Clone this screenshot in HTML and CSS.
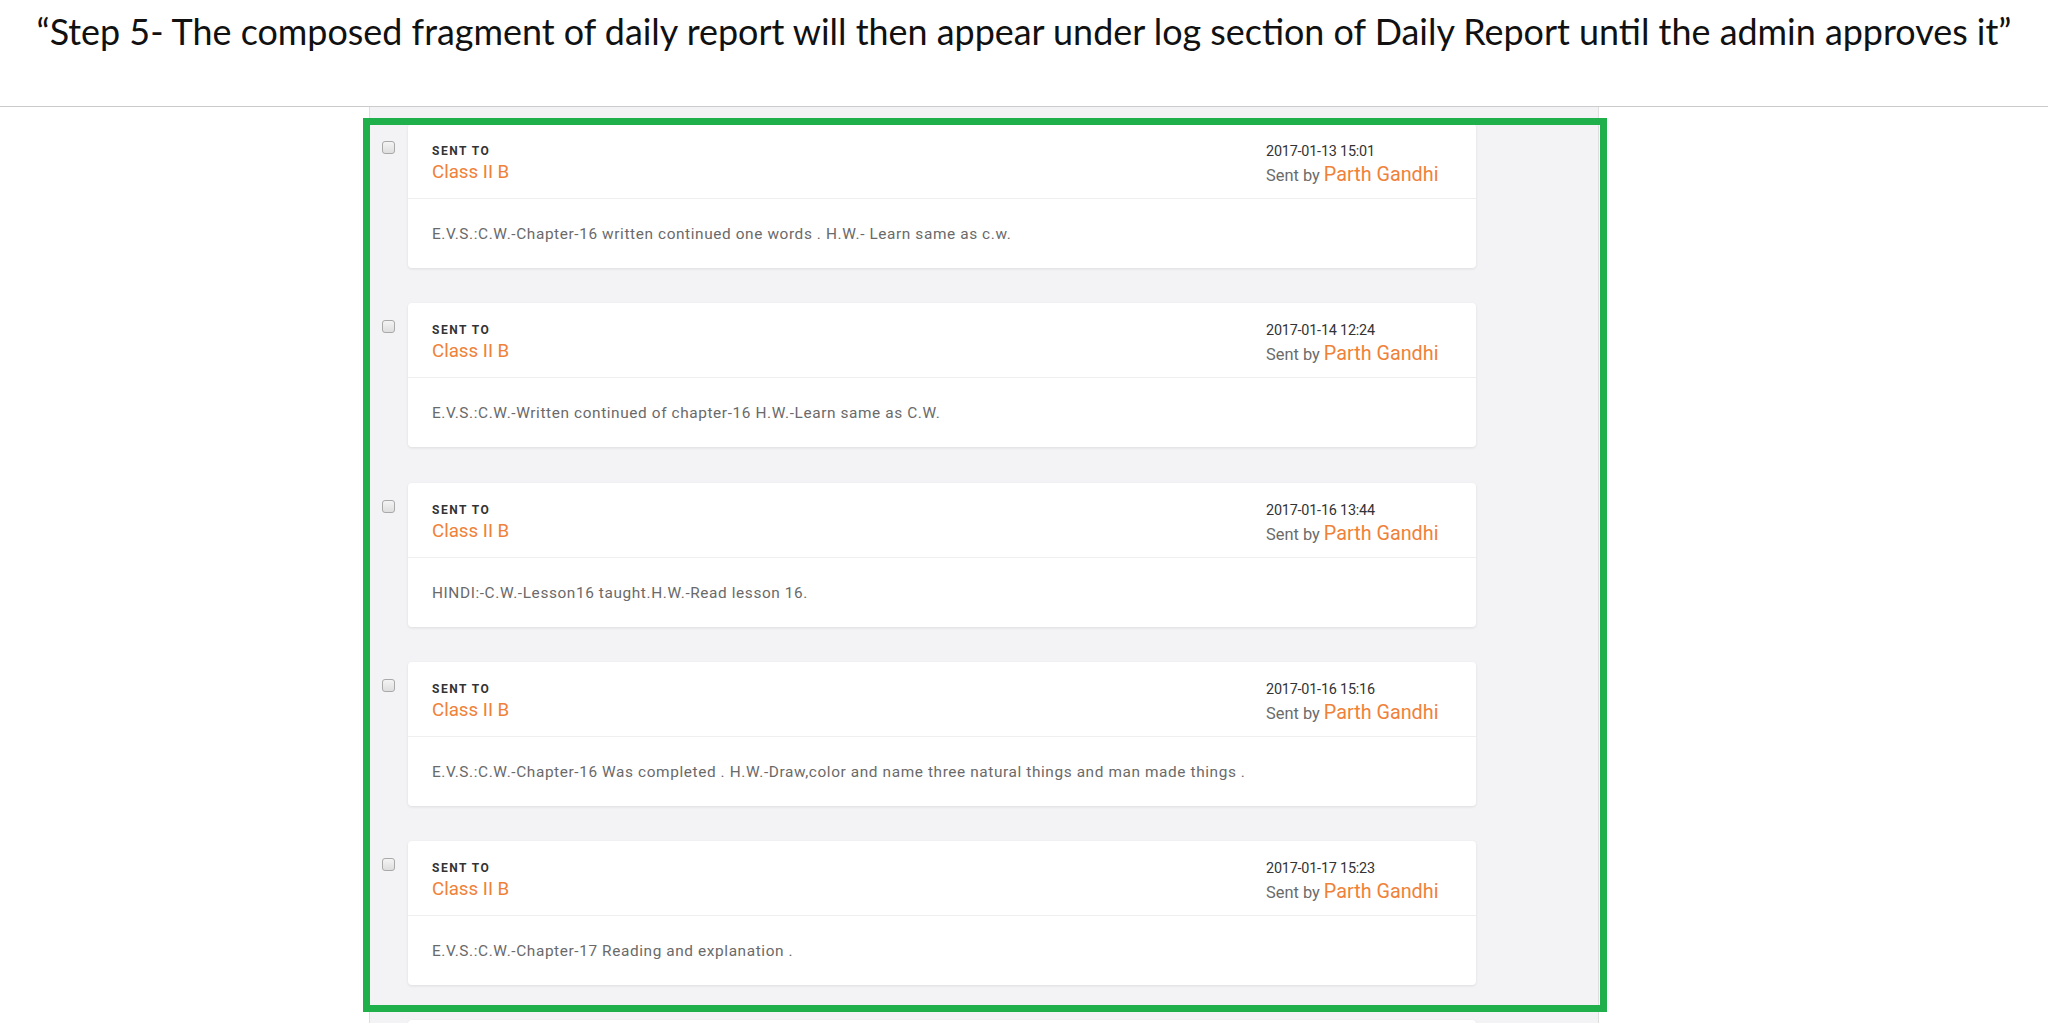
FILE: index.html
```html
<!DOCTYPE html>
<html lang="en">
<head>
<meta charset="utf-8">
<title>Daily Report Log</title>
<link rel="stylesheet" href="styles.css">
</head>
<body>
<header class="slide-head">
  <h1 class="slide-title">“Step 5- The composed fragment of daily report will then appear under log section of Daily Report until the admin approves it”</h1>
</header>
<main class="panel">
  <div class="row">
    <div class="check-col"><span class="check"></span></div>
    <article class="card">
      <div class="card-head">
        <div class="to">
          <div class="to-label">SENT TO</div>
          <div class="to-class">Class II B</div>
        </div>
        <div class="meta">
          <div class="date">2017-01-13 15:01</div>
          <div class="by">Sent by <span class="by-name">Parth Gandhi</span></div>
        </div>
      </div>
      <div class="card-body">E.V.S.:C.W.-Chapter-16 written continued one words . H.W.- Learn same as c.w.</div>
    </article>
  </div>
  <div class="row">
    <div class="check-col"><span class="check"></span></div>
    <article class="card">
      <div class="card-head">
        <div class="to">
          <div class="to-label">SENT TO</div>
          <div class="to-class">Class II B</div>
        </div>
        <div class="meta">
          <div class="date">2017-01-14 12:24</div>
          <div class="by">Sent by <span class="by-name">Parth Gandhi</span></div>
        </div>
      </div>
      <div class="card-body">E.V.S.:C.W.-Written continued of chapter-16 H.W.-Learn same as C.W.</div>
    </article>
  </div>
  <div class="row">
    <div class="check-col"><span class="check"></span></div>
    <article class="card">
      <div class="card-head">
        <div class="to">
          <div class="to-label">SENT TO</div>
          <div class="to-class">Class II B</div>
        </div>
        <div class="meta">
          <div class="date">2017-01-16 13:44</div>
          <div class="by">Sent by <span class="by-name">Parth Gandhi</span></div>
        </div>
      </div>
      <div class="card-body">HINDI:-C.W.-Lesson16 taught.H.W.-Read lesson 16.</div>
    </article>
  </div>
  <div class="row">
    <div class="check-col"><span class="check"></span></div>
    <article class="card">
      <div class="card-head">
        <div class="to">
          <div class="to-label">SENT TO</div>
          <div class="to-class">Class II B</div>
        </div>
        <div class="meta">
          <div class="date">2017-01-16 15:16</div>
          <div class="by">Sent by <span class="by-name">Parth Gandhi</span></div>
        </div>
      </div>
      <div class="card-body">E.V.S.:C.W.-Chapter-16 Was completed . H.W.-Draw,color and name three natural things and man made things .</div>
    </article>
  </div>
  <div class="row">
    <div class="check-col"><span class="check"></span></div>
    <article class="card">
      <div class="card-head">
        <div class="to">
          <div class="to-label">SENT TO</div>
          <div class="to-class">Class II B</div>
        </div>
        <div class="meta">
          <div class="date">2017-01-17 15:23</div>
          <div class="by">Sent by <span class="by-name">Parth Gandhi</span></div>
        </div>
      </div>
      <div class="card-body">E.V.S.:C.W.-Chapter-17 Reading and explanation .</div>
    </article>
  </div>
  <div class="row">
    <div class="check-col"></div>
    <article class="card card-stub"></article>
  </div>
</main>
<div class="highlight"></div>
</body>
</html>
```

FILE: styles.css
```css
html, body {
  margin: 0;
  padding: 0;
  background: #ffffff;
  height: 1024px;
  overflow: hidden;
}

body {
  position: relative;
  font-family: Roboto, "Liberation Sans", sans-serif;
}

.slide-head {
  height: 107px;
  box-sizing: border-box;
  border-bottom: 1px solid #cbcbcb;
  display: flex;
  justify-content: center;
  padding-top: 11px;
}

.slide-title {
  margin: 0;
  font-family: Lato, "Open Sans", sans-serif;
  font-weight: 400;
  font-size: 35.9px;
  line-height: 42px;
  color: #111111;
  white-space: nowrap;
}

.panel {
  margin-left: 369px;
  width: 1230px;
  height: 916px;
  box-sizing: border-box;
  overflow: hidden;
  border-left: 1px solid #dedede;
  border-right: 1px solid #dedede;
  background: #f3f3f5;
  padding-top: 17px;
  display: flex;
  flex-direction: column;
  gap: 35.3px;
}

.row {
  display: flex;
  align-items: flex-start;
  flex: none;
}

.check-col {
  width: 38px;
  flex: none;
}

.check {
  display: block;
  width: 11px;
  height: 11px;
  margin: 17px 0 0 12px;
  border: 1px solid #a9a9a9;
  border-radius: 3px;
  background: linear-gradient(#f4f4f4, #dedede);
}

.card {
  width: 1068px;
  background: #ffffff;
  border-radius: 4px;
  box-shadow: 0 1px 3px rgba(0, 0, 0, 0.09);
}

.card-stub {
  height: 144px;
}

.card-head {
  height: 74px;
  box-sizing: border-box;
  padding: 0 35px 0 24px;
  display: flex;
  justify-content: space-between;
  align-items: flex-start;
}

.to {
  padding-top: 20px;
}

.to-label {
  font-size: 12px;
  line-height: 14px;
  font-weight: 700;
  letter-spacing: 1.5px;
  color: #333333;
}

.to-class {
  margin-top: 3px;
  font-size: 18.7px;
  line-height: 22px;
  color: #f08139;
}

.meta {
  padding-top: 19px;
  width: 175px;
}

.date {
  font-size: 14.4px;
  line-height: 17px;
  color: #333333;
  letter-spacing: -0.2px;
}

.by {
  margin-top: 3px;
  font-size: 16.4px;
  line-height: 23px;
  color: #6b6b6b;
  white-space: nowrap;
}

.by-name {
  font-size: 19.8px;
  color: #f08139;
}

.card-body {
  border-top: 1px solid #efefef;
  padding: 26px 24px 25px;
  font-size: 15.4px;
  line-height: 18px;
  letter-spacing: 0.6px;
  color: #6a6a6a;
}

.highlight {
  position: absolute;
  left: 363px;
  top: 118px;
  width: 1244px;
  height: 894px;
  box-sizing: border-box;
  border: 7px solid #20b04b;
  pointer-events: none;
}
```
